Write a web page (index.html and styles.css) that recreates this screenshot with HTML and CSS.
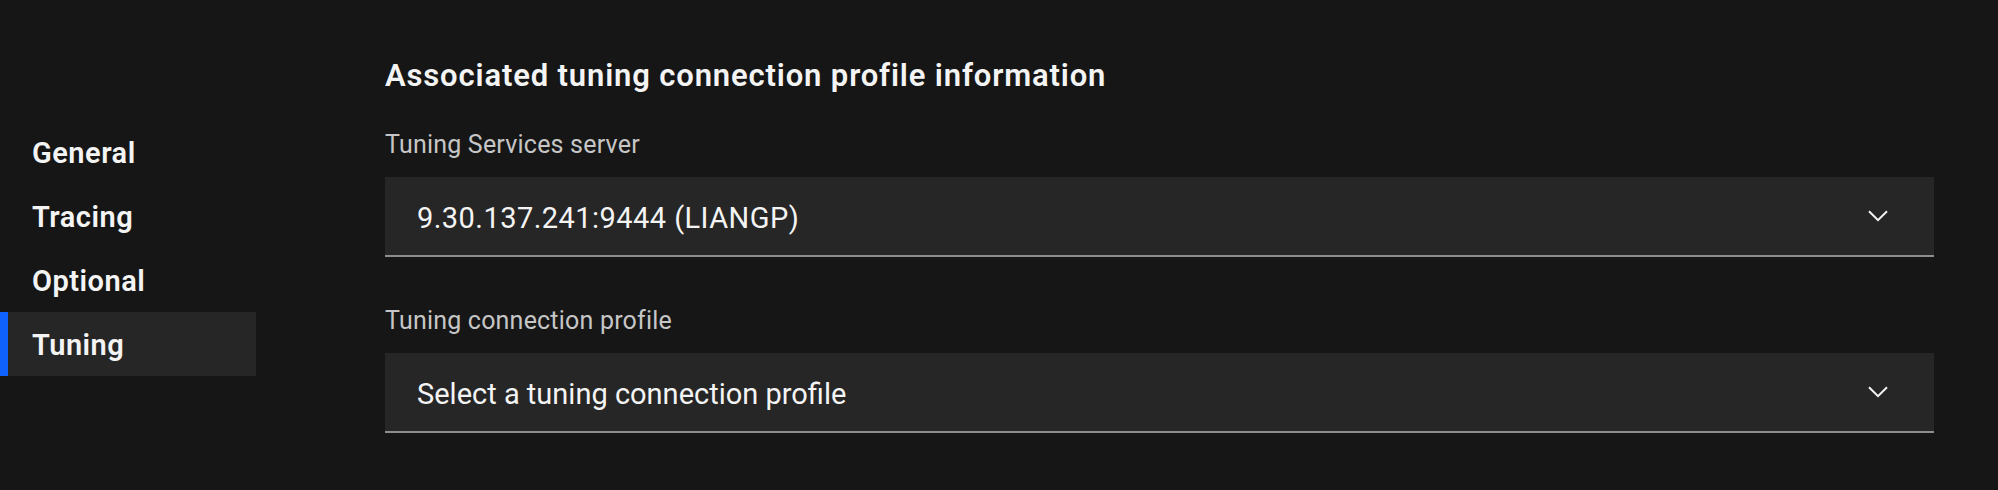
FILE: index.html
```html
<!DOCTYPE html>
<html lang="en">
<head>
<meta charset="utf-8">
<title>Tuning</title>
<link rel="stylesheet" href="styles.css">
</head>
<body>
<div class="layout">
  <nav class="side-nav">
    <a class="nav-item">General</a>
    <a class="nav-item">Tracing</a>
    <a class="nav-item">Optional</a>
    <a class="nav-item active">Tuning</a>
  </nav>
  <main class="content">
    <h2 class="heading">Associated tuning connection profile information</h2>
    <div class="field-group">
      <label class="label">Tuning Services server</label>
      <div class="select">
        <span class="select-text value">9.30.137.241:9444 (LIANGP)</span>
        <svg class="chevron" width="20" height="12" viewBox="0 0 20 12"><polyline points="1,1.2 10,10.2 19,1.2" fill="none" stroke="#f4f4f4" stroke-width="2"/></svg>
      </div>
    </div>
    <div class="field-group second">
      <label class="label">Tuning connection profile</label>
      <div class="select">
        <span class="select-text placeholder">Select a tuning connection profile</span>
        <svg class="chevron" width="20" height="12" viewBox="0 0 20 12"><polyline points="1,1.2 10,10.2 19,1.2" fill="none" stroke="#f4f4f4" stroke-width="2"/></svg>
      </div>
    </div>
  </main>
</div>
</body>
</html>
```
FILE: styles.css
```css
* { box-sizing: border-box; }
html, body {
  margin: 0;
  padding: 0;
  background: #161616;
  color: #f4f4f4;
  font-family: Roboto, "Liberation Sans", sans-serif;
}
.layout {
  display: flex;
  width: 1998px;
  height: 490px;
}
.side-nav {
  width: 256px;
  flex: 0 0 256px;
  padding-top: 120px;
  display: flex;
  flex-direction: column;
}
.nav-item {
  height: 64px;
  line-height: 62px;
  padding-top: 2px;
  padding-left: 32px;
  font-size: 29px;
  font-weight: 600;
  letter-spacing: 0.5px;
  color: #f4f4f4;
}
.nav-item.active {
  background: #262626;
  border-left: 8px solid #0f62fe;
  padding-left: 24px;
}
.content {
  margin-left: 129px;
  width: 1549px;
  padding-top: 56px;
}
.heading {
  margin: 0;
  font-size: 31px;
  line-height: 40px;
  font-weight: 600;
  letter-spacing: 0.85px;
  color: #f4f4f4;
}
.field-group {
  margin-top: 33px;
  display: flex;
  flex-direction: column;
  gap: 16px;
}
.field-group.second {
  margin-top: 48px;
}
.label {
  font-size: 25px;
  line-height: 32px;
  letter-spacing: 0.2px;
  color: #c6c6c6;
}
.select {
  height: 80px;
  background: #262626;
  border-bottom: 2px solid #8d8d8d;
  display: flex;
  align-items: center;
  justify-content: space-between;
  padding: 3px 46px 0 32px;
}
.select-text {
  font-size: 29px;
  line-height: 40px;
  color: #f4f4f4;
}
.select-text.value {
  letter-spacing: 0.45px;
}
.select-text.placeholder {
  letter-spacing: 0;
}
.chevron {
  display: block;
  margin-top: -3px;
}
```
